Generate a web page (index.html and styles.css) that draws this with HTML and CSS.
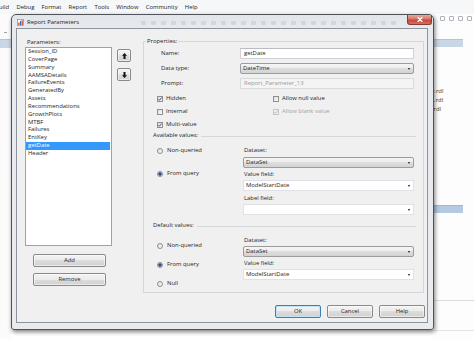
FILE: index.html
```html
<!DOCTYPE html>
<html lang="en">
<head>
<meta charset="utf-8">
<title>Report Parameters</title>
<link rel="stylesheet" href="styles.css">
</head>
<body>
<div class="screen">
  <nav class="menubar">
    <span class="menu first">uild</span>
    <span class="menu">Debug</span>
    <span class="menu">Format</span>
    <span class="menu">Report</span>
    <span class="menu">Tools</span>
    <span class="menu">Window</span>
    <span class="menu">Community</span>
    <span class="menu">Help</span>
  </nav>

  <div class="ide">
    <div class="ide-left">
      <div class="ide-left-top"><span class="dash"></span></div>
      <div class="band"></div>
    </div>
    <div class="ide-right">
      <div class="ide-right-top">
        <span class="tb-icon"></span><span class="tb-icon"></span><span class="tb-icon"></span><span class="tb-icon"></span>
      </div>
      <div class="band"></div>
      <div class="files">
        <div>ry.rdl</div>
        <div>in.rdl</div>
        <div>il.rdl</div>
      </div>
      <div class="band band-strong"></div>
      <div class="rule rule-a"></div>
      <div class="rule rule-b"></div>
    </div>
  </div>

  <div class="dialog">
    <div class="titlebar">
      <svg class="app-icon" viewBox="0 0 7 7" width="7" height="7">
        <rect x="0.5" y="0.5" width="6" height="6" fill="#fff" stroke="#6a7a8c" stroke-width="0.6"/>
        <rect x="1.3" y="3.5" width="1.2" height="2.5" fill="#d23a2a"/>
        <rect x="3" y="2" width="1.2" height="4" fill="#2d6cc0"/>
        <rect x="4.6" y="1.3" width="1.2" height="4.7" fill="#d23a2a"/>
      </svg>
      <span class="title">Report Parameters</span>
      <div class="glass">
        <span></span><span></span><span></span><span></span><span></span><span></span><span></span><span></span><span></span><span></span><span></span><span></span><span></span><span></span><span></span><span></span><span></span><span></span><span></span><span></span><span></span><span></span><span></span><span></span><span></span><span></span>
      </div>
      <div class="close-btn">
        <svg viewBox="0 0 6 5" width="6" height="5"><path d="M1 0.5 L5 4.5 M5 0.5 L1 4.5" stroke="#fff" stroke-width="1.2" stroke-linecap="round"/></svg>
      </div>
    </div>

    <div class="client">
      <div class="main">
        <div class="params">
          <div class="params-label">Parameters:</div>
          <div class="params-row">
            <ul class="listbox">
              <li>Session_ID</li>
              <li>CoverPage</li>
              <li>Summary</li>
              <li>AAMSADetails</li>
              <li>FailureEvents</li>
              <li>GeneratedBy</li>
              <li>Assets</li>
              <li>Recommendations</li>
              <li>GrowthPlots</li>
              <li>MTBF</li>
              <li>Failures</li>
              <li>EntKey</li>
              <li class="selected">getDate</li>
              <li>Header</li>
            </ul>
            <div class="move-btns">
              <button class="btn move-btn" type="button">
                <svg viewBox="0 0 5 6" width="5" height="6"><path d="M2.5 0 L5 2.8 L3.5 2.8 L3.5 6 L1.5 6 L1.5 2.8 L0 2.8 Z" fill="#111"/></svg>
              </button>
              <button class="btn move-btn" type="button">
                <svg viewBox="0 0 5 6" width="5" height="6"><path d="M2.5 6 L5 3.2 L3.5 3.2 L3.5 0 L1.5 0 L1.5 3.2 L0 3.2 Z" fill="#111"/></svg>
              </button>
            </div>
          </div>
          <div class="params-actions">
            <button class="btn wide" type="button">Add</button>
            <button class="btn wide" type="button">Remove</button>
          </div>
        </div>

        <fieldset class="props">
          <legend>Properties:</legend>
          <div class="fields">
            <span class="flabel">Name:</span>
            <div class="textbox">getDate</div>
            <span class="flabel">Data type:</span>
            <div class="dropdown"><span>DateTime</span><span class="caret"></span></div>
            <span class="flabel">Prompt:</span>
            <div class="textbox disabled">Report_Parameter_13</div>
          </div>

          <div class="checks">
            <div class="check"><span class="box"><svg viewBox="0 0 4 4" width="4" height="4"><path d="M0.4 2 L1.6 3.3 L3.6 0.5" fill="none" stroke="#3b4a6b" stroke-width="0.9"/></svg></span>Hidden</div>
            <div class="check"><span class="box"></span>Allow null value</div>
            <div class="check"><span class="box"></span>Internal</div>
            <div class="check disabled"><span class="box"><svg viewBox="0 0 4 4" width="4" height="4"><path d="M0.4 2 L1.6 3.3 L3.6 0.5" fill="none" stroke="#b0b4bc" stroke-width="0.9"/></svg></span>Allow blank value</div>
            <div class="check"><span class="box"><svg viewBox="0 0 4 4" width="4" height="4"><path d="M0.4 2 L1.6 3.3 L3.6 0.5" fill="none" stroke="#3b4a6b" stroke-width="0.9"/></svg></span>Multi-value</div>
          </div>

          <div class="sep"><span>Available values:</span><i></i></div>
          <div class="section">
            <div class="radios radios-avail">
              <div class="radio"><span class="dot"></span>Non-queried</div>
              <div class="radio"><span class="dot on"></span>From query</div>
            </div>
            <div class="query">
              <div class="qlabel q-first">Dataset:</div>
              <div class="dropdown q-first-ctl"><span>DataSet</span><span class="caret"></span></div>
              <div class="qlabel">Value field:</div>
              <div class="combo"><span>ModelStartDate</span><span class="caret"></span></div>
              <div class="qlabel q-gap">Label field:</div>
              <div class="combo"><span></span><span class="caret"></span></div>
            </div>
          </div>

          <div class="sep sep-default"><span>Default values:</span><i></i></div>
          <div class="section">
            <div class="radios radios-default">
              <div class="radio"><span class="dot"></span>Non-queried</div>
              <div class="radio"><span class="dot on"></span>From query</div>
              <div class="radio"><span class="dot"></span>Null</div>
            </div>
            <div class="query">
              <div class="qlabel q-first">Dataset:</div>
              <div class="dropdown"><span>DataSet</span><span class="caret"></span></div>
              <div class="qlabel">Value field:</div>
              <div class="combo"><span>ModelStartDate</span><span class="caret"></span></div>
            </div>
          </div>
        </fieldset>
      </div>

      <div class="dialog-buttons">
        <button class="btn action default" type="button">OK</button>
        <button class="btn action" type="button">Cancel</button>
        <button class="btn action" type="button">Help</button>
      </div>
    </div>
  </div>
</div>
</body>
</html>
```

FILE: styles.css
```css
* { box-sizing: border-box; }

html, body {
  margin: 0;
  padding: 0;
}

body {
  width: 474px;
  height: 339px;
  overflow: hidden;
  background: #fff;
  font-family: "Open Sans", "Noto Sans", sans-serif;
  font-size: 5.9px;
  line-height: 1;
  color: #1e1e1e;
}

.screen {
  position: relative;
  width: 474px;
  height: 339px;
  overflow: hidden;
  background: #fff;
}

/* ---------- IDE background ---------- */
.menubar {
  height: 14px;
  display: flex;
  align-items: center;
  background: #f6f7f9;
  color: #222;
}

.menu {
  padding: 0 3.6px;
  line-height: 14px;
  white-space: nowrap;
}

.menu.first {
  padding-left: 0;
  margin-left: -1px;
}

.ide {
  height: 325px;
  display: flex;
  justify-content: space-between;
}

.ide-left {
  width: 11px;
  background: #fbfbfb;
}

.ide-left-top {
  height: 25px;
  display: flex;
  align-items: flex-end;
  padding: 0 0 6px 4px;
}

.dash {
  width: 3px;
  height: 1px;
  background: #9aa3ad;
}

.band {
  height: 9px;
  background: #c9d6e5;
  border-top: 1px solid #b3c4d8;
}

.ide-right {
  width: 40px;
  background: #fdfdfd;
}

.ide-right-top {
  height: 25px;
  display: flex;
  gap: 4px;
  padding: 2px 0 0 6px;
  align-items: flex-start;
}

.tb-icon {
  width: 5px;
  height: 5px;
  border: 1px solid #8f969e;
  border-radius: 1px;
  opacity: 0.7;
}

.ide-right .band {
  width: 30px;
  height: 8px;
  margin-left: -1px;
}

.files {
  margin: 40px 0 0 -5px;
  color: #333;
}

.files div {
  height: 9px;
  line-height: 9px;
  white-space: nowrap;
}

.ide-right .band-strong {
  margin-top: 91px;
  background: #b4c9e2;
  border-top-color: #9fb6d2;
}

.rule {
  height: 1px;
  background: #dcdcdc;
}

.rule-a { margin-top: 87px; }
.rule-b { margin-top: 29px; background: #e6e6e6; }

/* ---------- Dialog window ---------- */
.dialog {
  position: absolute;
  left: 11px;
  top: 14px;
  width: 423px;
  height: 316px;
  display: flex;
  flex-direction: column;
  padding: 0 5px 6px 4px;
  border: 1px solid #4f545a;
  border-radius: 5px 5px 3px 3px;
  background: linear-gradient(180deg, #e2e6eb 0, #e7eaee 14px, #e9ebee 100%);
  box-shadow: 1px 2px 4px rgba(0, 0, 0, 0.5);
}

.titlebar {
  height: 13px;
  display: flex;
  align-items: center;
}

.app-icon {
  flex: none;
  margin: 2px 0 0 1px;
}

.title {
  margin: 2px 0 0 3px;
  white-space: nowrap;
  color: #1a1a1a;
}

.glass {
  flex: 1;
  display: flex;
  gap: 5px;
  padding: 2px 0 0 62px;
  overflow: hidden;
}

.glass span {
  flex: none;
  width: 5px;
  height: 4px;
  border-radius: 1px;
  background: rgba(110, 120, 135, 0.16);
  filter: blur(0.7px);
}

.close-btn {
  align-self: flex-start;
  flex: none;
  width: 25px;
  height: 10px;
  margin: 0 -4px 0 6px;
  display: flex;
  align-items: center;
  justify-content: center;
  border: 1px solid #8a3a30;
  border-top: none;
  border-radius: 0 0 3px 3px;
  background: linear-gradient(180deg, #e8a89c 0, #d7786a 45%, #c5483a 55%, #d0705c 100%);
}

.client {
  flex: 1;
  display: flex;
  flex-direction: column;
  padding: 7px 3px 0 8px;
  border: 1px solid #8e949b;
  background: #f0f0f0;
}

.main {
  display: flex;
  height: 257px;
}

/* ---------- Parameters column ---------- */
.params {
  width: 118px;
  flex: none;
}

.params-label {
  margin-top: 1px;
  padding-left: 2px;
  line-height: 10px;
  height: 10px;
}

.params-row {
  display: flex;
  gap: 5px;
}

.listbox {
  list-style: none;
  margin: 0;
  padding: 0;
  width: 87px;
  height: 199px;
  border: 1px solid #9ea3a9;
  background: #fff;
  overflow: hidden;
}

.listbox li {
  height: 7.85px;
  line-height: 7.85px;
  padding-left: 2px;
  margin-right: 1px;
  white-space: nowrap;
}

.listbox li.selected {
  background: #3399ff;
  color: #fff;
}

.move-btns {
  display: flex;
  flex-direction: column;
  gap: 6px;
  padding-top: 2px;
}

.btn {
  font: inherit;
  color: #1e1e1e;
  height: 13px;
  padding: 0;
  margin: 0;
  display: flex;
  align-items: center;
  justify-content: center;
  border: 1px solid #8a8a8a;
  border-radius: 2px;
  background: linear-gradient(180deg, #f3f3f3 0, #ebebeb 50%, #dddddd 50%, #d0d0d0 100%);
  box-shadow: inset 0 0 0 1px rgba(255, 255, 255, 0.55);
}

.move-btn {
  width: 14px;
}

.params-actions {
  display: flex;
  flex-direction: column;
  gap: 6px;
  margin-top: 8px;
  padding-left: 8px;
}

.btn.wide {
  width: 73px;
}

/* ---------- Properties group ---------- */
.props {
  width: 281px;
  height: 257px;
  margin: 0;
  padding: 0;
  min-width: 0;
  border: 1px solid #d3d7dc;
  border-radius: 0;
}

.props legend {
  padding: 0 1px;
  margin-left: 2px;
  line-height: 10px;
  height: 10px;
}

.fields {
  display: grid;
  grid-template-columns: 79px 174px;
  grid-auto-rows: 11px;
  row-gap: 4px;
  align-items: center;
  margin: 2px 0 0 17px;
}

.flabel {
  white-space: nowrap;
}

.textbox {
  height: 11px;
  display: flex;
  align-items: center;
  padding-left: 3px;
  border: 1px solid #cfd2d6;
  border-top-color: #b9bdc3;
  background: #fff;
  white-space: nowrap;
}

.textbox.disabled {
  background: #f4f4f4;
  border-color: #d9dadc;
  color: #9a9a9a;
}

.dropdown,
.combo {
  height: 11px;
  display: flex;
  align-items: center;
  padding: 0 3px 0 2px;
  white-space: nowrap;
}

.dropdown {
  border: 1px solid #9c9c9c;
  border-radius: 2px;
  background: linear-gradient(180deg, #f5f5f5 0, #ececec 50%, #dedede 50%, #d3d3d3 100%);
}

.combo {
  border: 1px solid #dfe1e6;
  background: #fff;
}

.caret {
  margin-left: auto;
  width: 0;
  height: 0;
  border-left: 1.5px solid transparent;
  border-right: 1.5px solid transparent;
  border-top: 2px solid #111;
}

.checks {
  display: grid;
  grid-template-columns: 116px auto;
  grid-auto-rows: 13px;
  align-items: center;
  margin: 3px 0 0 13px;
}

.check,
.radio {
  display: flex;
  align-items: center;
  height: 10px;
  white-space: nowrap;
}

.box {
  flex: none;
  width: 6px;
  height: 6px;
  margin-right: 3px;
  display: flex;
  align-items: center;
  justify-content: center;
  border: 1px solid #8e8f8f;
  background: linear-gradient(135deg, #dadada, #fdfdfd);
}

.check.disabled {
  color: #a3a3a3;
}

.check.disabled .box {
  border-color: #c4c4c4;
  background: #f4f4f4;
}

.sep {
  display: flex;
  align-items: center;
  height: 10px;
  padding: 0 7px 0 9px;
  white-space: nowrap;
}

.sep i {
  flex: 1;
  height: 1px;
  margin-left: 3px;
  background: #d3d7dc;
}

.sep-default {
  margin-top: 6px;
}

.section {
  display: flex;
}

.radios {
  width: 99px;
  flex: none;
  padding-left: 13px;
  display: flex;
  flex-direction: column;
}

.radios-avail {
  padding-top: 5px;
  gap: 13px;
}

.radios-default {
  padding-top: 10px;
  gap: 9px;
}

.dot {
  flex: none;
  width: 6px;
  height: 6px;
  margin-right: 4px;
  border-radius: 50%;
  border: 1px solid #8f8f8f;
  background: linear-gradient(135deg, #dcdcdc, #fbfbfb);
}

.dot.on {
  background: radial-gradient(circle at 50% 50%, #1c3b6e 0, #2f5b9c 1.2px, #8aa3c8 1.9px, #f2f2f2 2.2px);
}

.query {
  width: 171px;
  flex: none;
  display: flex;
  flex-direction: column;
}

.qlabel {
  height: 10px;
  line-height: 10px;
  padding-left: 1px;
  margin-top: 1px;
  margin-bottom: 1px;
}

.qlabel.q-first {
  margin-top: 4px;
}

.q-first-ctl {
  margin-top: 1px;
}

.qlabel.q-gap {
  margin-top: 2px;
}

/* ---------- dialog buttons ---------- */
.dialog-buttons {
  display: flex;
  justify-content: flex-end;
  gap: 6px;
  margin: 12px -1px 0 0;
}

.btn.action {
  width: 46px;
}

.btn.default {
  border-color: #3c7fb1;
  box-shadow: inset 0 0 0 1px #c4e3f6;
}
```
